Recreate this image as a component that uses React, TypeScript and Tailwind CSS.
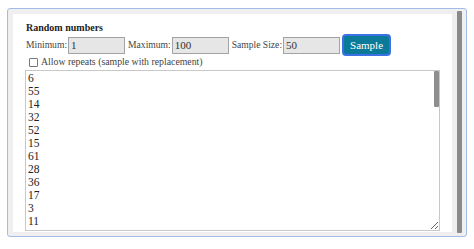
import { useState } from 'react';

// first rows match the sample shown, the rest fill out the 50
const initial = [
  6, 55, 14, 32, 52, 15, 61, 28, 36, 17, 3, 11, 89, 44, 70, 2, 97, 23, 58, 81, 40, 9, 66, 74, 31,
  86, 19, 50, 63, 7, 92, 25, 38, 77, 13, 48, 99, 21, 84, 56, 4, 69, 35, 90, 27, 60, 42, 80, 1, 73,
];

export default function App() {
  const [min, setMin] = useState('1');
  const [max, setMax] = useState('100');
  const [size, setSize] = useState('50');
  const [repeats, setRepeats] = useState(false);
  const [values, setValues] = useState<number[]>(initial);

  const sample = () => {
    const lo = parseInt(min, 10) || 0;
    const hi = parseInt(max, 10) || 0;
    const n = parseInt(size, 10) || 0;
    const out: number[] = [];
    const pool: number[] = [];
    for (let i = lo; i <= hi; i++) pool.push(i);
    for (let i = 0; i < n && (repeats || pool.length); i++) {
      if (repeats) out.push(lo + Math.floor(Math.random() * (hi - lo + 1)));
      else out.push(pool.splice(Math.floor(Math.random() * pool.length), 1)[0]);
    }
    setValues(out);
  };

  const inputCls =
    'w-[57px] h-[17px] px-[2px] bg-[#e6e6e6] border border-[#a3a3a3] text-[11px] leading-[15px] text-[#333] outline-none';

  return (
    <div className="pt-[8px] pl-[7px] font-['Liberation_Serif',serif]">
      <div className="w-[460px] h-[229px] border border-[#a2bce8] rounded-[3px] bg-[#efefef] flex">
        <div className="flex-1 mt-[5px] ml-[5px] mb-[4px] bg-white flex flex-col pl-[12px] pr-[12px] pt-[8px]">
          <div className="pl-[1px] text-[10px] leading-[12px] font-bold text-[#222]">Random numbers</div>

          <div className="flex items-center h-[22px] text-[9.6px] text-[#444] pl-[1px]">
            <span className="mr-[1px]">Minimum:</span>
            <input className={inputCls} value={min} onChange={(e) => setMin(e.target.value)} />
            <span className="ml-[3px] mr-[1px]">Maximum:</span>
            <input className={inputCls} value={max} onChange={(e) => setMax(e.target.value)} />
            <span className="ml-[3px] mr-[1px]">Sample Size:</span>
            <input className={inputCls} value={size} onChange={(e) => setSize(e.target.value)} />
            <button
              onClick={sample}
              className="ml-[2px] w-[49px] h-[22px] border-2 border-[#3a72e6] rounded-[4px] bg-[#0b7a98] text-white text-[11px] leading-none"
            >
              Sample
            </button>
          </div>

          <label className="flex items-center h-[12px] pl-[4px] text-[9.8px] text-[#444]">
            <input
              type="checkbox"
              checked={repeats}
              onChange={(e) => setRepeats(e.target.checked)}
              className="appearance-none w-[9px] h-[9px] border border-[#777] rounded-[1px] bg-white mr-[3px] checked:bg-[#0b7a98]"
            />
            Allow repeats (sample with replacement)
          </label>

          <div className="relative mt-[2px] flex-1 mb-[1px]">
            <textarea
              readOnly
              value={values.join('\n')}
              className="w-full h-full border border-[#c8c8c8] pl-[2px] pt-[1px] text-[11.5px] leading-[13px] text-[#222] overflow-hidden outline-none"
            />
            <div className="absolute right-[1px] top-[1px] w-[5px] h-[36px] bg-[#8e8e8e] rounded-[1px]" />
          </div>
        </div>

        <div className="w-[14px] flex justify-center pt-[2px] pb-[3px]">
          <div className="w-[5px] h-full bg-[#8a8a8a] rounded-[1px] ml-[1px]" />
        </div>
      </div>
    </div>
  );
}
